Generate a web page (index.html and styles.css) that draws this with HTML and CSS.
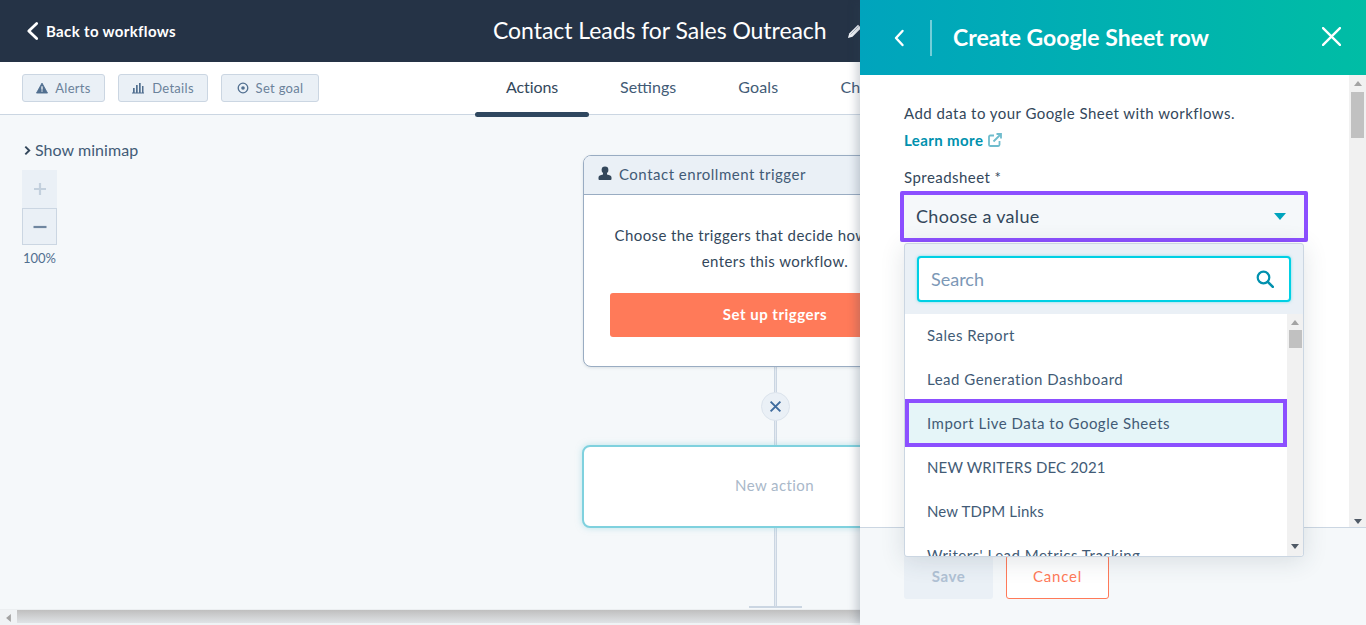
FILE: index.html
```html
<!DOCTYPE html>
<html lang="en">
<head>
<meta charset="utf-8">
<title>Create Google Sheet row</title>
<link rel="stylesheet" href="styles.css">
</head>
<body>
<div class="app">
  <header class="topbar">
    <a class="back-link">
      <svg class="back-icon" viewBox="0 0 14 20"><path d="M11.500 2 3 10l8.500 8" fill="none" stroke="#fff" stroke-width="3" stroke-linecap="round" stroke-linejoin="round"/></svg>
      <span class="back-text">Back to workflows</span>
    </a>
    <h1 class="wf-title">Contact Leads for Sales Outreach</h1>
    <svg class="pencil" viewBox="0 0 16 16"><path d="M1 15l1.200-4.500L11 1.700l3.300 3.300-8.800 8.800z" fill="#f2f5f8"/><path d="M3.500 11.500l8-8" stroke="#9aa7b5" stroke-width=".8"/></svg>
  </header>
  <nav class="toolbar">
    <div class="tool-buttons">
      <button class="tool-btn btn-alerts">
        <svg class="tool-icon" viewBox="0 0 14 13"><path d="M7 .8 13.400 12.400H.6z" fill="#516f90" stroke="#516f90" stroke-linejoin="round"/><rect x="6.300" y="4.500" width="1.400" height="4" fill="#fff"/><rect x="6.300" y="9.300" width="1.400" height="1.400" fill="#fff"/></svg>
        <span>Alerts</span>
      </button>
      <button class="tool-btn btn-details">
        <svg class="tool-icon" viewBox="0 0 12 12"><g fill="#516f90"><rect x="1" y="6" width="1.700" height="5"/><rect x="4" y="3" width="1.700" height="8"/><rect x="7" y="1" width="1.700" height="10"/><rect x="10" y="4" width="1.500" height="7"/><rect x="0" y="10.500" width="12" height="1"/></g></svg>
        <span>Details</span>
      </button>
      <button class="tool-btn btn-goal">
        <svg class="tool-icon" viewBox="0 0 12 12"><circle cx="6" cy="6" r="4.800" fill="none" stroke="#516f90" stroke-width="1.300"/><circle cx="6" cy="6" r="1.800" fill="#516f90"/></svg>
        <span>Set goal</span>
      </button>
    </div>
    <div class="tabs">
      <a class="tab tab-active">Actions</a>
      <a class="tab">Settings</a>
      <a class="tab tab-goals">Goals</a>
      <a class="tab">Checks</a>
    </div>
  </nav>
  <main class="canvas">
    <div class="minimap-toggle">
      <svg class="minimap-chevron" viewBox="0 0 8 12"><path d="M1.500 1.500 6 6l-4.500 4.500" fill="none" stroke="#33475b" stroke-width="2.200"/></svg>
      <span>Show minimap</span>
    </div>
    <div class="zoom-control">
      <div class="zoom-btn zoom-in"><svg viewBox="0 0 14 14"><path d="M7 1v12M1 7h12" stroke="#c3d0dd" stroke-width="2.200"/></svg></div>
      <div class="zoom-btn zoom-out"><svg viewBox="0 0 14 14"><path d="M0.500 7h13" stroke="#6f86a0" stroke-width="2.200"/></svg></div>
      <div class="zoom-label">100%</div>
    </div>

    <div class="connector conn-one"></div>
    <div class="connector conn-two"></div>
    <div class="conn-end"></div>
    <div class="conn-delete"><svg viewBox="0 0 12 12"><path d="M1.500 1.500l9 9M10.500 1.500l-9 9" stroke="#3f6c9e" stroke-width="1.800"/></svg></div>

    <section class="node trigger-node">
      <div class="node-head">
        <svg class="contact-icon" viewBox="0 0 14 14"><circle cx="7" cy="4" r="3.400" fill="#33475b"/><path d="M5 7h4v1.500c2.500.4 4.500 1.300 4.500 3V13a1 1 0 0 1-1 1h-11a1 1 0 0 1-1-1v-1.500c0-1.700 2-2.600 4.500-3z" fill="#33475b"/></svg>
        <span>Contact enrollment trigger</span>
      </div>
      <div class="node-body">
        <p class="node-text">Choose the triggers that decide how a contact enters this workflow.</p>
        <button class="primary-btn">Set up triggers</button>
      </div>
    </section>
    <section class="node action-node">New action</section>

    <div class="h-scroll">
      <svg class="h-arrow" viewBox="0 0 6 10"><path d="M6 0v10L0 5z" fill="#a3a3a3"/></svg>
      <div class="h-thumb"></div>
    </div>
  </main>
</div>

<aside class="panel">
  <div class="panel-head">
    <svg class="panel-back" viewBox="0 0 12 18"><path d="M9.500 2 3 9l6.500 7" fill="none" stroke="#fff" stroke-width="2.400" stroke-linecap="round" stroke-linejoin="round"/></svg>
    <div class="panel-divider"></div>
    <h2 class="panel-title">Create Google Sheet row</h2>
    <svg class="panel-close" viewBox="0 0 18 18"><path d="M1 1l16 16M17 1 1 17" stroke="#fff" stroke-width="2.200" stroke-linecap="round"/></svg>
  </div>
  <div class="panel-body">
    <div class="panel-content">
      <p class="intro">Add data to your Google Sheet with workflows.</p>
      <a class="learn-more">Learn more
        <svg class="ext-icon" viewBox="0 0 14 14"><path d="M6 2.500H2.200A1.200 1.200 0 0 0 1 3.700v8.100A1.200 1.200 0 0 0 2.200 13h8.100a1.200 1.200 0 0 0 1.200-1.200V8M5.500 8.500 13 1M8.500 1H13v4.500" fill="none" stroke="#6fbccd" stroke-width="1.800"/></svg>
      </a>
      <label class="field-label">Spreadsheet *</label>
      <div class="select">
        <span class="select-value">Choose a value</span>
        <span class="select-caret"></span>
      </div>
    </div>
    <div class="v-scroll">
      <svg class="v-arrow" viewBox="0 0 10 6"><path d="M5 0l5 6H0z" fill="#a3a3a3"/></svg>
      <div class="v-thumb"></div>
      <svg class="v-arrow v-arrow-down" viewBox="0 0 10 6"><path d="M0 0h10L5 6z" fill="#505a66"/></svg>
    </div>
  </div>
  <div class="panel-foot">
    <button class="save-btn">Save</button>
    <button class="cancel-btn">Cancel</button>
  </div>

  <div class="dropdown">
    <div class="search-wrap">
      <div class="search-box">
        <span class="search-placeholder">Search</span>
        <svg class="search-icon" viewBox="0 0 18 18"><circle cx="7.500" cy="7.500" r="5.800" fill="none" stroke="#0091ae" stroke-width="2.200"/><path d="M11.800 11.800l5 5" stroke="#0091ae" stroke-width="2.600" stroke-linecap="round"/></svg>
      </div>
    </div>
    <div class="list-wrap">
      <ul class="options">
        <li class="option">Sales Report</li>
        <li class="option">Lead Generation Dashboard</li>
        <li class="option option-active">Import Live Data to Google Sheets</li>
        <li class="option option-tight">NEW WRITERS DEC 2021</li>
        <li class="option option-tight">New TDPM Links</li>
        <li class="option">Writers' Lead Metrics Tracking</li>
      </ul>
      <div class="list-scroll">
        <svg class="v-arrow" viewBox="0 0 10 6"><path d="M5 0l5 6H0z" fill="#a3a3a3"/></svg>
        <div class="list-thumb"></div>
        <svg class="v-arrow v-arrow-down" viewBox="0 0 10 6"><path d="M0 0h10L5 6z" fill="#505a66"/></svg>
      </div>
    </div>
  </div>
</aside>
</body>
</html>
```
FILE: styles.css
```css
* { box-sizing: border-box; }
html, body { margin: 0; height: 100%; overflow: hidden; }
body {
  position: relative;
  font-family: "Lato", "Open Sans", sans-serif;
  color: #33475b;
  background: #f5f8fa;
}
button { font-family: inherit; padding: 0; }
h1, h2, p, ul { margin: 0; padding: 0; }

.app { display: flex; flex-direction: column; height: 625px; width: 100%; }

.topbar {
  height: 62px;
  flex: none;
  background: #253346;
  display: flex;
  align-items: center;
  padding-left: 26px;
}
.back-link { display: flex; align-items: center; gap: 7px; color: #fff; font-weight: 700; font-size: 15px; letter-spacing: .35px; width: 467px; }
.back-icon { width: 13px; height: 20px; }
.back-text { padding-bottom: 1px; }
.wf-title { font-size: 23px; font-weight: 400; color: #fff; white-space: nowrap; padding-bottom: 2px; letter-spacing: -.05px; }
.pencil { width: 16px; height: 16px; margin-left: 20px; }

.toolbar {
  position: relative;
  z-index: 1;
  height: 53px;
  flex: none;
  background: #fff;
  border-bottom: 1px solid #cbd6e2;
  display: flex;
  padding-left: 22px;
}
.tool-buttons { display: flex; gap: 13px; padding-top: 12px; width: 453px; align-items: flex-start; }
.tool-btn {
  height: 28px;
  display: flex;
  align-items: center;
  justify-content: center;
  gap: 7px;
  background: #eaf0f6;
  border: 1px solid #cbd6e2;
  border-radius: 3px;
  font-size: 13px;
  letter-spacing: .3px;
  color: #6b829b;
}
.btn-alerts { width: 83px; }
.btn-details { width: 90px; gap: 8px; }
.btn-goal { width: 98px; }
.tool-icon { width: 12px; height: 12px; flex: none; }

.tabs { display: flex; height: 52px; }
.tab {
  position: relative;
  padding: 15px 31px 0;
  font-size: 16px;
  color: #425b76;
  white-space: nowrap;
}
.tab-goals { letter-spacing: .2px; }
.tab-active { color: #33475b; letter-spacing: -.1px; }
.tab-active::after {
  content: "";
  position: absolute;
  left: 0; right: 0; bottom: -3px;
  height: 5px;
  border-radius: 3px;
  background: #2f475f;
}

.canvas { position: relative; flex: 1; background: #f5f8fa; overflow: hidden; }
.minimap-toggle {
  position: absolute;
  left: 24px; top: 25px;
  display: flex;
  align-items: center;
  gap: 4px;
  font-size: 16px;
  line-height: 20px;
  letter-spacing: .05px;
  color: #425b76;
}
.minimap-chevron { width: 7px; height: 11px; }
.zoom-control { position: absolute; left: 22px; top: 55px; width: 35px; }
.zoom-btn { height: 38px; background: #eaf0f6; display: flex; align-items: center; justify-content: center; }
.zoom-btn svg { width: 14px; height: 14px; }
.zoom-out { height: 37px; border: 1px solid #cbd6e2; }
.zoom-label { font-size: 13px; text-align: center; margin-top: 5px; color: #516f90; }

.node { position: absolute; left: 583px; width: 384px; background: #fff; border-radius: 8px; }
.trigger-node { top: 40px; height: 212px; border: 1px solid #99acc2; box-shadow: 0 1px 3px rgba(45,62,80,.12); }
.node-head {
  height: 39px;
  background: #eaf0f6;
  border-bottom: 1px solid #99acc2;
  border-radius: 7px 7px 0 0;
  display: flex;
  align-items: center;
  padding: 0 0 2px 14px;
  gap: 7px;
  font-size: 15px;
  letter-spacing: .5px;
  color: #425b76;
}
.contact-icon { width: 14px; height: 14px; margin-top: -3px; }
.node-body { padding: 27px 26px 0; text-align: center; }
.node-text { font-size: 15px; line-height: 26px; letter-spacing: .4px; color: #33475b; }
.primary-btn {
  display: block;
  width: 330px;
  height: 44px;
  margin-top: 19px;
  padding-bottom: 2px;
  background: #ff7a59;
  border: 0;
  border-radius: 3px;
  color: #fff;
  font-size: 15px;
  font-weight: 700;
  letter-spacing: .5px;
}
.action-node {
  left: 582px;
  width: 385px;
  top: 330px;
  height: 83px;
  padding-bottom: 3px;
  border: 2px solid #7fd1de;
  box-shadow: 0 0 6px rgba(127,209,222,.5);
  display: flex;
  align-items: center;
  justify-content: center;
  font-size: 15px;
  letter-spacing: .4px;
  color: #a9b8c9;
}
.connector { position: absolute; left: 774px; width: 3px; background: #e3e9f0; border-left: 1px solid #cbd6e2; border-right: 1px solid #cbd6e2; background-clip: padding-box; }
.conn-one { top: 252px; height: 80px; }
.conn-two { top: 412px; height: 80px; }
.conn-end { position: absolute; left: 749px; top: 491px; width: 53px; height: 2px; background: #cbd6e2; }
.conn-delete {
  position: absolute;
  left: 761px; top: 277px;
  width: 29px; height: 29px;
  border-radius: 50%;
  background: #eaf0f6;
  border: 1px solid #dbe3ec;
  display: flex;
  align-items: center;
  justify-content: center;
}
.conn-delete svg { width: 13px; height: 13px; }

.h-scroll {
  position: absolute;
  left: 0; right: 0; bottom: 0;
  height: 15px;
  background: #f0f3f5;
  display: flex;
  align-items: center;
  box-shadow: 0 -1px 0 #eceff1;
}
.h-arrow { width: 5px; height: 8px; margin-left: 6px; flex: none; }
.h-thumb { margin-left: 6px; flex: 1; height: 13px; align-self: flex-start; margin-top: 0; background: linear-gradient(#bfbfbf, #e0e3e6); }

.panel {
  position: absolute;
  z-index: 2;
  left: 860px; top: 0;
  width: 506px; height: 625px;
  display: flex;
  flex-direction: column;
  background: #fff;
  box-shadow: -4px 0 8px rgba(45,62,80,.22);
}
.panel-head {
  height: 75px;
  flex: none;
  background: linear-gradient(90deg, #00a4bd, #00bda5);
  display: flex;
  align-items: center;
  padding-left: 33px;
  color: #fff;
}
.panel-back { width: 12px; height: 18px; flex: none; }
.panel-divider { width: 2px; height: 36px; background: rgba(255,255,255,.45); margin-left: 25px; }
.panel-title { font-size: 23px; font-weight: 700; margin-left: 21px; padding-bottom: 2px; color: #fff; flex: 1; }
.panel-close { width: 19px; height: 19px; margin-right: 25px; margin-top: -3px; }

.panel-body { height: 452px; flex: none; display: flex; background: #fff; }
.panel-content { flex: 1; padding: 28px 0 0 44px; }
.intro { font-size: 15px; line-height: 20px; letter-spacing: .45px; color: #33475b; }
.learn-more { display: flex; align-items: center; gap: 5px; margin-top: 7px; font-size: 15px; font-weight: 700; line-height: 20px; letter-spacing: .4px; color: #0091ae; }
.ext-icon { width: 14px; height: 14px; }
.field-label { display: block; margin-top: 17px; font-size: 15px; line-height: 20px; letter-spacing: .45px; color: #33475b; }
.select {
  width: 408px;
  height: 51px;
  margin: 4px 0 0 -4px;
  border: 4px solid #8c4fff;
  border-radius: 2px;
  background: #f5f8fa;
  display: flex;
  align-items: center;
  justify-content: space-between;
  padding: 0 18px 0 12px;
  font-size: 18px;
  letter-spacing: .3px;
  color: #33475b;
}
.select-value { padding-bottom: 2px; }
.select-caret { width: 0; height: 0; border-left: 6.500px solid transparent; border-right: 6.500px solid transparent; border-top: 7px solid #00a4bd; }

.v-scroll { width: 17px; flex: none; background: #f1f1f1; display: flex; flex-direction: column; align-items: center; padding: 6px 0 3px; }
.v-arrow { width: 8px; height: 5px; flex: none; }
.v-arrow-down { margin-top: auto; }
.v-thumb { width: 13px; height: 46px; background: #c1c1c1; margin-top: 6px; }

.panel-foot {
  flex: 1;
  background: #f5f8fa;
  border-top: 1px solid #cbd6e2;
  display: flex;
  align-items: flex-start;
  gap: 13px;
  padding: 27px 0 0 44px;
}
.save-btn, .cancel-btn { height: 44px; border-radius: 3px; font-size: 15px; padding-bottom: 2px; }
.save-btn { width: 89px; background: #eaf0f6; border: 0; color: #b0c1d4; font-weight: 700; letter-spacing: .6px; }
.cancel-btn { width: 103px; background: #fff; border: 1px solid #ff7a59; color: #ff7a59; letter-spacing: .8px; }

.dropdown {
  position: absolute;
  left: 44px; top: 243px;
  width: 400px; height: 314px;
  background: #eaf0f6;
  border: 1px solid #cbd6e2;
  border-radius: 3px;
  box-shadow: 0 4px 24px rgba(45,62,80,.14);
  display: flex;
  flex-direction: column;
}
.search-wrap { height: 70px; flex: none; padding: 12px 12px 0; }
.search-box {
  height: 46px;
  background: #fff;
  border: 2px solid #00d0e4;
  border-radius: 4px;
  box-shadow: 0 0 3px rgba(0,208,228,.5);
  display: flex;
  align-items: center;
  justify-content: space-between;
  padding: 0 15px 0 12px;
}
.search-placeholder { font-size: 18px; color: #7c98b6; }
.search-icon { width: 18px; height: 18px; }
.list-wrap { flex: 1; min-height: 0; display: flex; background: #fff; border-radius: 0 0 3px 3px; overflow: hidden; }
.options { flex: 1; list-style: none; position: relative; overflow: hidden; }
.option { height: 44px; padding: 0 0 2px 22px; display: flex; align-items: center; font-size: 15px; letter-spacing: .5px; color: #425b76; white-space: nowrap; }
.option-tight { letter-spacing: .15px; }
.option-active {
  position: relative;
  z-index: 1;
  height: 48px;
  margin: -3px 0 -1px;
  padding-bottom: 0;
  background: #e5f5f8;
  box-shadow: inset 0 0 0 4px #8c4fff;
}
.list-scroll { width: 16px; flex: none; background: #f1f1f1; display: flex; flex-direction: column; align-items: center; padding: 6px 0 7px; }
.list-thumb { width: 13px; height: 18px; background: #c1c1c1; margin-top: 5px; }
```
